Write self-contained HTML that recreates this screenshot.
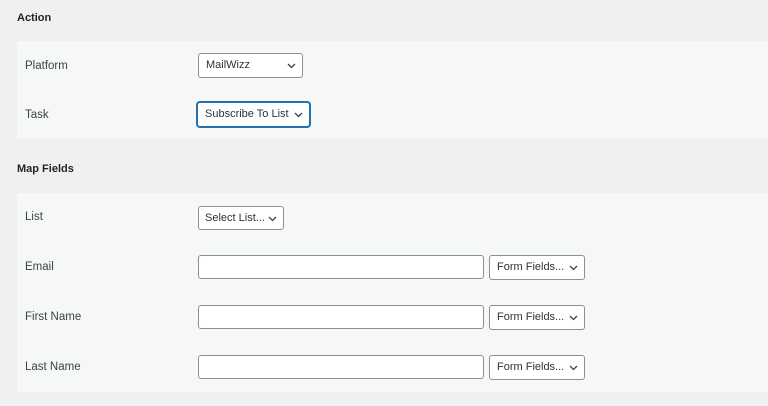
<!DOCTYPE html>
<html><head><style>
body{margin:0;width:768px;height:406px;background:#f0f0f1;font-family:"Liberation Sans",sans-serif;font-size:11.5px;color:#1d2327;position:relative;overflow:hidden}
.a{position:absolute}
.h{font-weight:bold;font-size:11px;left:17px}
.p{left:17px;width:751px;background:#f6f7f7}
.l{left:25px;color:#3c434a}
.s{border:1px solid #8c8f94;border-radius:3px;background:#fff;box-sizing:border-box;color:#2c3338;padding-left:7px;line-height:23px;font-size:11px}
.s svg{position:absolute;right:6px;top:9px}
.i{border:1px solid #8c8f94;border-radius:3px;background:#fff;box-sizing:border-box}
</style></head><body>
<div class="a h" style="top:12px">Action</div>
<div class="a p" style="top:41px;height:98px"></div>
<div class="a l" style="top:60px">Platform</div>
<div class="a s" style="left:198px;top:53px;width:105px;height:25px">MailWizz<svg width="9" height="6"><path d="M1 1l3.5 3.5 3.5-3.5" fill="none" stroke="#3c434a" stroke-width="1.3"/></svg></div>
<div class="a l" style="top:109px">Task</div>
<div class="a s" style="left:197px;top:102px;width:113px;height:25px;border-color:#2271b1;box-shadow:0 0 0 1px #2271b1">Subscribe To List<svg width="9" height="6"><path d="M1 1l3.5 3.5 3.5-3.5" fill="none" stroke="#3c434a" stroke-width="1.3"/></svg></div>
<div class="a h" style="top:163px">Map Fields</div>
<div class="a p" style="top:193px;height:199px"></div>
<div class="a l" style="top:211px">List</div>
<div class="a s" style="left:198px;top:206px;width:86px;height:24px;line-height:22px;padding-left:6px">Select List...<svg width="9" height="6"><path d="M1 1l3.5 3.5 3.5-3.5" fill="none" stroke="#3c434a" stroke-width="1.3"/></svg></div>
<div class="a l" style="top:261px">Email</div>
<div class="a i" style="left:198px;top:255px;width:286px;height:24px"></div>
<div class="a s" style="left:489px;top:255px;width:96px;height:25px">Form Fields...<svg width="9" height="6"><path d="M1 1l3.5 3.5 3.5-3.5" fill="none" stroke="#3c434a" stroke-width="1.3"/></svg></div>
<div class="a l" style="top:311px">First Name</div>
<div class="a i" style="left:198px;top:305px;width:286px;height:24px"></div>
<div class="a s" style="left:489px;top:305px;width:96px;height:25px">Form Fields...<svg width="9" height="6"><path d="M1 1l3.5 3.5 3.5-3.5" fill="none" stroke="#3c434a" stroke-width="1.3"/></svg></div>
<div class="a l" style="top:361px">Last Name</div>
<div class="a i" style="left:198px;top:355px;width:286px;height:24px"></div>
<div class="a s" style="left:489px;top:355px;width:96px;height:25px">Form Fields...<svg width="9" height="6"><path d="M1 1l3.5 3.5 3.5-3.5" fill="none" stroke="#3c434a" stroke-width="1.3"/></svg></div>
</body></html>
